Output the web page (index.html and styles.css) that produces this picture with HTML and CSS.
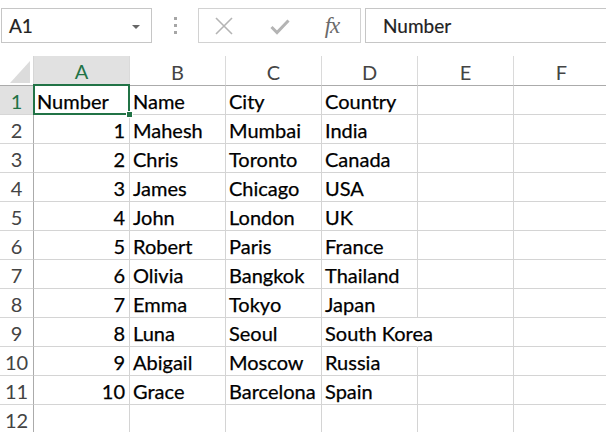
FILE: index.html
```html
<!DOCTYPE html>
<html>
<head>
<meta charset="utf-8">
<link rel="stylesheet" href="styles.css">
</head>
<body>
<div class="toolbar">
  <div class="namebox"><span class="name">A1</span><span class="caret"></span></div>
  <div class="dots"><i></i><i></i><i></i></div>
  <div class="btns">
    <span class="btn b1">
      <svg width="20" height="18" viewBox="0 0 20 18"><path d="M2 1 L18 17 M18 1 L2 17" stroke="#b4b4b4" stroke-width="1.6" fill="none"/></svg>
    </span>
    <span class="btn b2">
      <svg width="20" height="16" viewBox="0 0 20 16"><path d="M1.5 8 L7 13.5 L18.5 1.5" stroke="#b4b4b4" stroke-width="3" fill="none"/></svg>
    </span>
    <span class="btn fx">fx</span>
  </div>
  <div class="formula">Number</div>
</div>

<div class="sheet">
  <div class="corner"><svg width="34" height="30" viewBox="0 0 34 30"><polygon points="10,27 30,27 30,5" fill="#dcdcdc"/></svg></div>
  <div class="ch sel">A</div><div class="ch">B</div><div class="ch">C</div><div class="ch">D</div><div class="ch">E</div><div class="ch">F</div>

  <div class="rh sel">1</div><div class="c active">Number<span class="handle"></span></div><div class="c">Name</div><div class="c">City</div><div class="c">Country</div><div class="c"></div><div class="c"></div>
  <div class="rh">2</div><div class="c n">1</div><div class="c">Mahesh</div><div class="c">Mumbai</div><div class="c">India</div><div class="c"></div><div class="c"></div>
  <div class="rh">3</div><div class="c n">2</div><div class="c">Chris</div><div class="c">Toronto</div><div class="c">Canada</div><div class="c"></div><div class="c"></div>
  <div class="rh">4</div><div class="c n">3</div><div class="c">James</div><div class="c">Chicago</div><div class="c">USA</div><div class="c"></div><div class="c"></div>
  <div class="rh">5</div><div class="c n">4</div><div class="c">John</div><div class="c">London</div><div class="c">UK</div><div class="c"></div><div class="c"></div>
  <div class="rh">6</div><div class="c n">5</div><div class="c">Robert</div><div class="c">Paris</div><div class="c">France</div><div class="c"></div><div class="c"></div>
  <div class="rh">7</div><div class="c n">6</div><div class="c">Olivia</div><div class="c">Bangkok</div><div class="c">Thailand</div><div class="c"></div><div class="c"></div>
  <div class="rh">8</div><div class="c n">7</div><div class="c">Emma</div><div class="c">Tokyo</div><div class="c">Japan</div><div class="c"></div><div class="c"></div>
  <div class="rh">9</div><div class="c n">8</div><div class="c">Luna</div><div class="c">Seoul</div><div class="c spill">South Korea</div><div class="c"></div><div class="c"></div>
  <div class="rh">10</div><div class="c n">9</div><div class="c">Abigail</div><div class="c">Moscow</div><div class="c">Russia</div><div class="c"></div><div class="c"></div>
  <div class="rh">11</div><div class="c n">10</div><div class="c">Grace</div><div class="c">Barcelona</div><div class="c">Spain</div><div class="c"></div><div class="c"></div>
  <div class="rh">12</div><div class="c"></div><div class="c"></div><div class="c"></div><div class="c"></div><div class="c"></div><div class="c"></div>
</div>
</body>
</html>
```

FILE: styles.css
```css
* { box-sizing: border-box; }
html, body {
  margin: 0;
  padding: 0;
  background: #fff;
}
body {
  width: 606px;
  height: 432px;
  overflow: hidden;
  font-family: "Lato", "Liberation Sans", sans-serif;
  color: #000;
}

/* ---------- formula toolbar ---------- */
.toolbar {
  display: flex;
  height: 43px;
  padding-top: 8px;
}
.namebox {
  margin-left: 1px;
  width: 151px;
  border: 1px solid #c6c6c6;
  display: flex;
  align-items: center;
  justify-content: space-between;
  padding: 0 11px 0 7px;
  font-size: 19px;
  color: #222;
  -webkit-text-stroke: 0.2px #222;
}
.caret {
  width: 0;
  height: 0;
  border-left: 4px solid transparent;
  border-right: 4px solid transparent;
  border-top: 4px solid #666;
  margin-top: 2px;
}
.dots {
  width: 46px;
  display: flex;
  flex-direction: column;
  align-items: center;
  justify-content: center;
  gap: 4px;
}
.dots i {
  display: block;
  width: 3px;
  height: 3px;
  background: #a6a6a6;
}
.btns {
  width: 163px;
  border: 1px solid #d2d2d2;
  display: flex;
  align-items: center;
}
.btn {
  display: flex;
  justify-content: center;
  align-items: center;
}
.b1 { width: 50px; }
.b2 { width: 62px; padding-top: 2px; }
.fx {
  width: 42px;
  font-family: "Liberation Serif", serif;
  font-style: italic;
  font-size: 23px;
  color: #6a6a6a;
  letter-spacing: -1px;
}
.formula {
  margin-left: 4px;
  flex: 1;
  border: 1px solid #c6c6c6;
  border-right: none;
  display: flex;
  align-items: center;
  padding-left: 17px;
  font-size: 19px;
  color: #222;
  -webkit-text-stroke: 0.2px #222;
}

/* ---------- sheet grid ---------- */
.sheet {
  margin-top: 13px;
  display: grid;
  grid-template-columns: 34px repeat(6, 96px);
  grid-template-rows: 30px;
  grid-auto-rows: 29px;
  font-size: 20px;
}
.corner {
  border-right: 1px solid #d6d6d6;
  border-bottom: 1px solid #ababab;
}
.corner svg { display: block; }
.ch {
  border-right: 1px solid #dadada;
  border-bottom: 1px solid #ababab;
  display: flex;
  align-items: center;
  justify-content: center;
  color: #444;
  padding-top: 2px;
}
.ch.sel {
  background: #e1e1e1;
  color: #217346;
  border-bottom: 2px solid #217346;
}
.rh {
  border-right: 1px solid #ababab;
  border-bottom: 1px solid #d6d6d6;
  display: flex;
  align-items: center;
  justify-content: center;
  color: #444;
  padding-top: 2px;
}
.rh.sel {
  background: #e1e1e1;
  color: #217346;
}
.c {
  position: relative;
  border-right: 1px solid #d4d4d4;
  border-bottom: 1px solid #d4d4d4;
  padding: 2px 4px 0 3px;
  line-height: 27px;
  white-space: nowrap;
  -webkit-text-stroke: 0.25px #000;
}
.c.n { text-align: right; }
.c.spill { border-right-color: transparent; overflow: visible; }
.c.active { z-index: 2; }
.c.active::before {
  content: "";
  position: absolute;
  top: -2px;
  left: -1px;
  right: -1px;
  bottom: -1px;
  border: 2px solid #217346;
}
.handle {
  position: absolute;
  right: -4px;
  bottom: -4px;
  width: 7px;
  height: 7px;
  background: #217346;
  border: 1px solid #fff;
}
```
